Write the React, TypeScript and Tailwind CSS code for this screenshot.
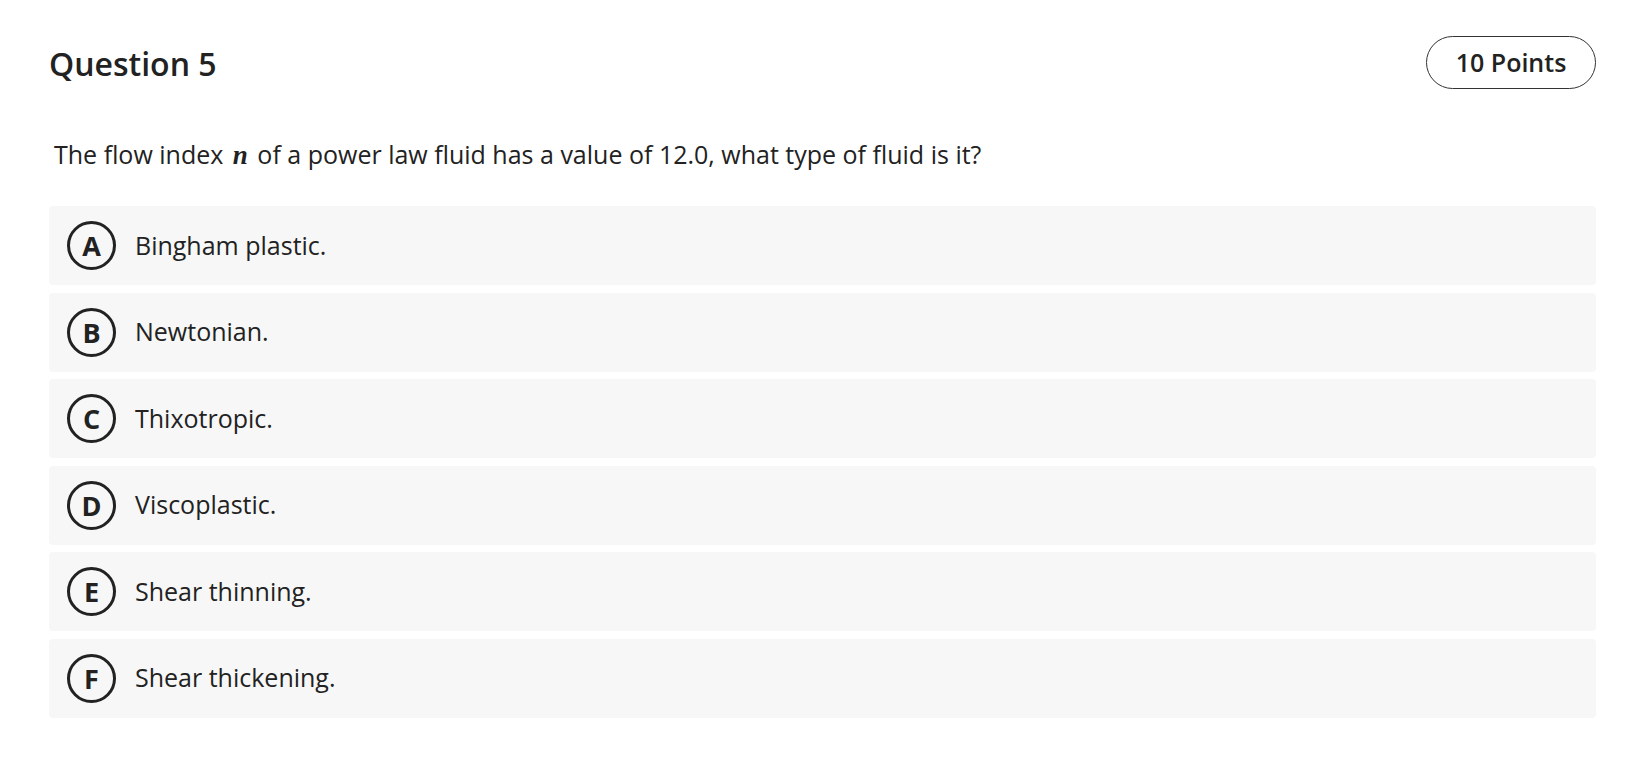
const options = [
  { key: 'A', text: 'Bingham plastic.' },
  { key: 'B', text: 'Newtonian.' },
  { key: 'C', text: 'Thixotropic.' },
  { key: 'D', text: 'Viscoplastic.' },
  { key: 'E', text: 'Shear thinning.' },
  { key: 'F', text: 'Shear thickening.' },
]

export default function App() {
  return (
    <div className="min-h-screen bg-white pl-[49px] pr-[38px] pt-[36px] font-['Open_Sans',sans-serif] text-[#222]">
      <div className="flex items-center justify-between h-[53px]">
        <h2 className="text-[32px] font-semibold leading-none pt-[2px]">Question 5</h2>
        <div className="w-[170px] h-[53px] rounded-full border border-[#333] flex items-center justify-center text-[25px] font-semibold">
          10 Points
        </div>
      </div>

      <p className="mt-[47px] pl-[5px] text-[25px] leading-[36px]">
        The flow index{' '}
        <span className="mx-[3px] font-['Liberation_Serif',serif] italic font-bold text-[27px]">n</span>{' '}
        of a power law fluid has a value of 12.0, what type of fluid is it?
      </p>

      <div className="mt-[33px] flex flex-col gap-[7.5px]">
        {options.map((o) => (
          <div
            key={o.key}
            className="h-[79px] rounded-[4px] bg-[#f7f7f7] flex items-center pl-[18px] gap-[19px]"
          >
            <div className="w-[49px] h-[49px] rounded-full border-[3px] border-[#222] flex items-center justify-center text-[27px] font-bold leading-none">
              {o.key}
            </div>
            <span className="text-[25px]">{o.text}</span>
          </div>
        ))}
      </div>
    </div>
  )
}
